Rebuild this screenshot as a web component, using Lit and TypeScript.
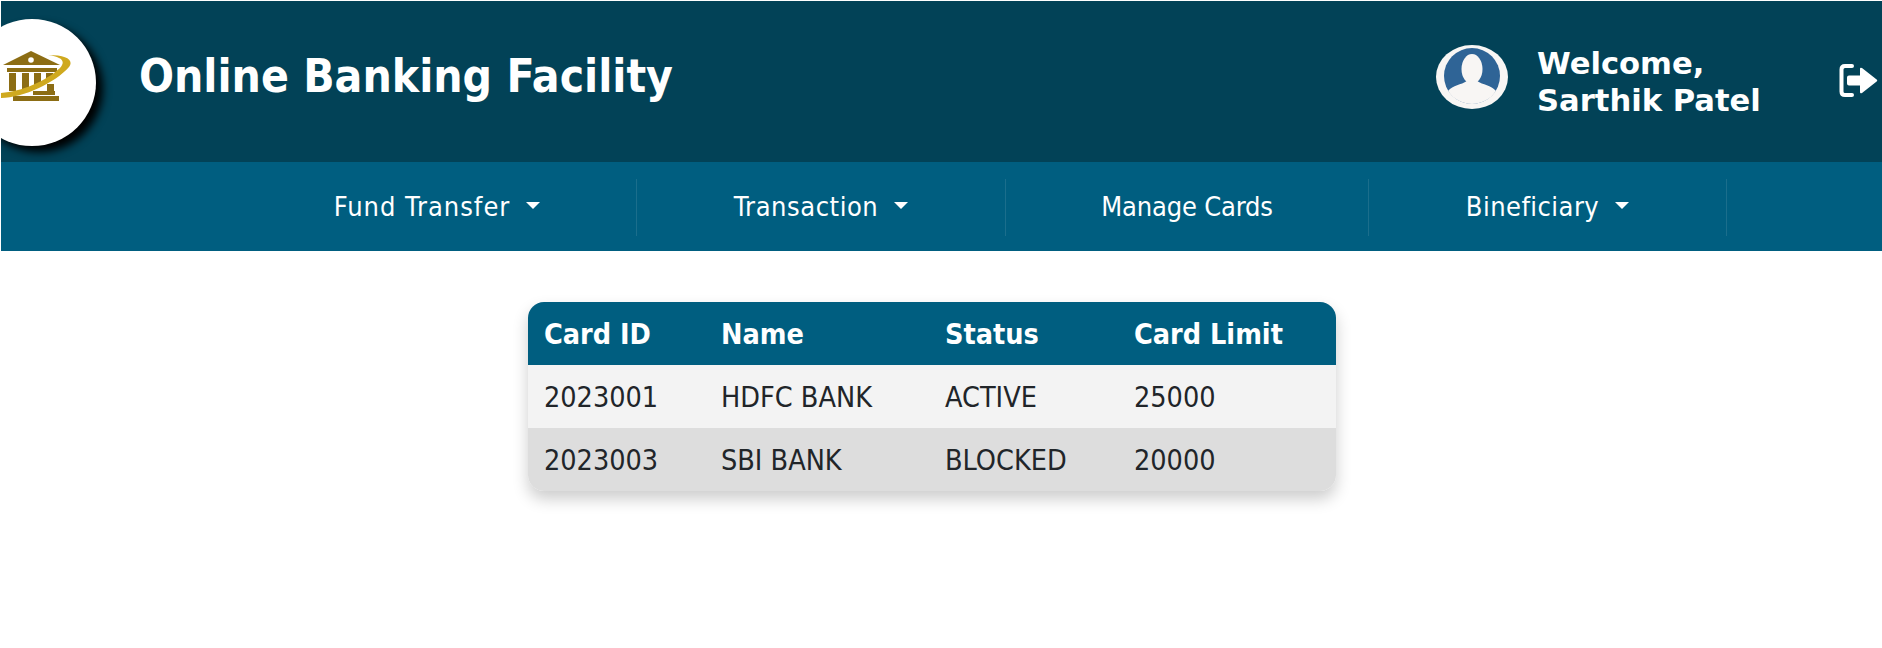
import { LitElement, html, css, svg } from "lit";
import { customElement } from "lit/decorators.js";

const rows = [
  ["2023001", "HDFC BANK", "ACTIVE", "25000"],
  ["2023003", "SBI BANK", "BLOCKED", "20000"],
];

const navs = [
  { label: "Fund Transfer", caret: true, width: 359, pad: 40, ls: 1 },
  { label: "Transaction", caret: true, width: 369, pad: 0, ls: 0.55 },
  { label: "Manage Cards", caret: false, width: 363, pad: 0, ls: -0.2 },
  { label: "Bineficiary", caret: true, width: 358, pad: 0, ls: 0.45 },
];

@customElement("app-root")
export class AppRoot extends LitElement {
  static styles = css`
    :host {
      display: block;
      width: 1882px;
      height: 648px;
      overflow: hidden;
      background: #fff;
      font-family: "DejaVu Sans Condensed", "DejaVu Sans", Verdana, sans-serif;
      color: #212529;
    }
    .page { padding: 1px 0 0 1px; }
    .top {
      position: relative;
      height: 161px;
      background: #024257;
      display: flex;
      align-items: center;
      color: #fff;
      overflow: hidden;
    }
    .logo {
      position: absolute;
      left: -33px;
      top: 18px;
      width: 128px;
      height: 127px;
      border-radius: 50%;
      background: #fff;
      box-shadow: 7px 6px 8px #000;
      display: flex;
    }
    .logo svg { position: absolute; left: 33px; top: 32px; }
    .title {
      margin-left: 138px;
      margin-top: -12px;
      font-size: 45.8px;
      font-weight: 700;
      line-height: 56px;
      white-space: nowrap;
    }
    .user {
      margin-left: auto;
      display: flex;
      align-items: center;
    }
    .avatar { display: block; width: 72px; height: 64px; margin-top: -10px; }
    .hello {
      margin-left: 29px;
      font-family: "DejaVu Sans", Verdana, sans-serif;
      font-size: 30.6px;
      font-weight: 700;
      line-height: 37px;
      width: 302px;
      margin-top: 0;
    }
    .logout { display: block; margin-right: 2px; margin-top: -2px; }
    .nav {
      height: 89px;
      background: #005e80;
      display: flex;
      padding: 16px 0 15px 277px;
      box-sizing: border-box;
      color: #fff;
    }
    .item {
      box-sizing: border-box;
      border-right: 1px solid #1b6e8c;
      display: flex;
      align-items: center;
      justify-content: center;
      font-size: 27px;
      gap: 16px;
      white-space: nowrap;
      padding-bottom: 2px;
      margin-top: 1px;
    }
    .caret {
      width: 0;
      height: 0;
      border-left: 7.5px solid transparent;
      border-right: 7.5px solid transparent;
      border-top: 7.5px solid #fff;
      margin-top: -2px;
    }
    .wrap {
      display: flex;
      padding: 51px 0 0 527px;
    }
    table {
      width: 808px;
      border-collapse: separate;
      border-spacing: 0;
      border-radius: 16px;
      box-shadow: 0 8px 16px rgba(0, 0, 0, 0.2);
      table-layout: fixed;
      font-size: 28.5px;
      color: #212529;
    }
    th, td {
      height: 63px;
      padding: 2px 0 0 16px;
      text-align: left;
      box-sizing: border-box;
      white-space: nowrap;
    }
    th { background: #005e80; color: #fff; font-weight: 700; }
    th:first-child { border-top-left-radius: 16px; }
    th:last-child { border-top-right-radius: 16px; }
    tbody tr:nth-child(1) td { background: #f3f3f3; }
    tbody tr:nth-child(2) td { background: #dddddd; }
    tbody tr:last-child td:first-child { border-bottom-left-radius: 16px; }
    tbody tr:last-child td:last-child { border-bottom-right-radius: 16px; }
    .c1 { width: 177px; }
    .c2 { width: 224px; }
    .c3 { width: 189px; }
    .c4 { width: 218px; }
  `;

  private logo() {
    return html`<svg width="72" height="64" viewBox="0 0 72 64" aria-hidden="true">
      ${svg`
        <path d="M2 14 L30 0 L59 14 Z" fill="#8c6d14"/>
        <circle cx="30" cy="9" r="2.8" fill="#fff"/>
        <rect x="6" y="17" width="50" height="4" fill="#8c6d14"/>
        <rect x="8" y="22" width="7" height="18" fill="#8c6d14"/>
        <rect x="21" y="22" width="7" height="16" fill="#8c6d14"/>
        <rect x="33" y="22" width="7" height="12" fill="#8c6d14"/>
        <rect x="45" y="22" width="7" height="7" fill="#8c6d14"/>
        <rect x="46" y="33" width="7" height="8" fill="#8c6d14"/>
        <rect x="32" y="40" width="22" height="4" fill="#8c6d14"/>
        <rect x="12" y="45" width="46" height="5" fill="#8c6d14"/>
        <path d="M-1 47 C22 47 54 32 68 16 C73 9 66 4 47 4 C61 6 65 10 59 17 C45 30 20 41 -1 42 Z" fill="#cfa91f"/>
      `}
    </svg>`;
  }

  private avatar() {
    return html`<svg class="avatar" viewBox="0 0 72 64" aria-hidden="true">
      ${svg`
        <ellipse cx="36" cy="32" rx="36" ry="32" fill="#f8f6f4"/>
        <ellipse cx="36" cy="31" rx="28" ry="28" fill="#2f6496"/>
        <path d="M12 46 C17 40 25 40 31 36 L41 36 C47 40 55 40 60 46 C55 54 45 59 36 59 C27 59 17 54 12 46 Z" fill="#f8f6f4"/>
        <ellipse cx="36" cy="24" rx="10.500" ry="15" fill="#f8f6f4"/>
      `}
    </svg>`;
  }

  private logoutIcon() {
    return html`<svg class="logout" width="41" height="36" viewBox="0 0 41 36" aria-hidden="true">
      ${svg`
        <path d="M13 3 H6 Q2.5 3 2.5 6.5 V28.5 Q2.5 32 6 32 H13" fill="none" stroke="#fff" stroke-width="4" stroke-linecap="round"/>
        <path d="M10 12.5 H21 V6 Q21 4 23 5 L37 16 Q39.500 17.500 37 19 L23 30 Q21 31 21 29 V22.500 H10 Q8 22.500 8 20.500 V14.500 Q8 12.500 10 12.500 Z" fill="#fff"/>
      `}
    </svg>`;
  }

  render() {
    return html`<div class="page">
      <header class="top">
        <div class="logo">${this.logo()}</div>
        <div class="title">Online Banking Facility</div>
        <div class="user">
          ${this.avatar()}
          <div class="hello">Welcome,<br />Sarthik Patel</div>
          ${this.logoutIcon()}
        </div>
      </header>
      <nav class="nav">
        ${navs.map(
          (n) => html`<div
            class="item"
            style="width:${n.width}px;padding-right:${n.pad}px;letter-spacing:${n.ls}px"
          >
            <span>${n.label}</span>${n.caret ? html`<span class="caret"></span>` : ""}
          </div>`
        )}
      </nav>
      <div class="wrap">
        <table>
          <colgroup>
            <col class="c1" /><col class="c2" /><col class="c3" /><col class="c4" />
          </colgroup>
          <thead>
            <tr><th>Card ID</th><th>Name</th><th>Status</th><th>Card Limit</th></tr>
          </thead>
          <tbody>
            ${rows.map((r) => html`<tr>${r.map((c) => html`<td>${c}</td>`)}</tr>`)}
          </tbody>
        </table>
      </div>
    </div>`;
  }
}
